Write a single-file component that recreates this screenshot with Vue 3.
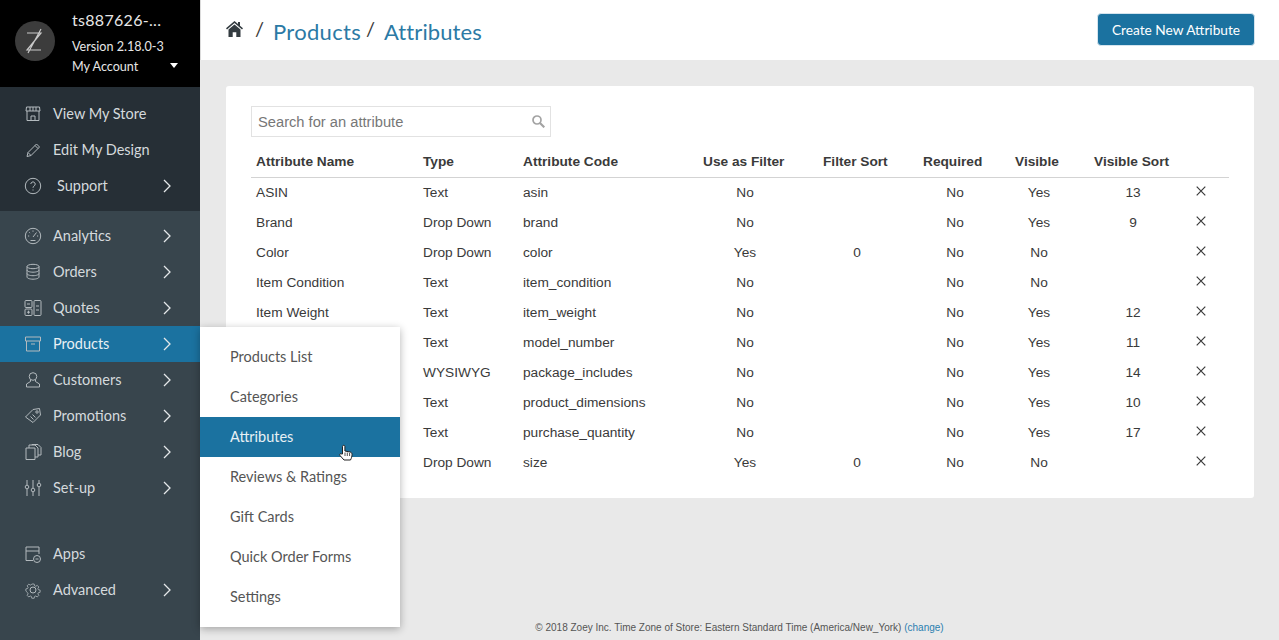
<script setup>
const topLinks = [
  { label: 'View My Store', icon: 'store' },
  { label: 'Edit My Design', icon: 'pencil' },
  { label: 'Support', icon: 'help', arrow: true, wide: true }
]

const mainLinks = [
  { label: 'Analytics', icon: 'gauge', arrow: true },
  { label: 'Orders', icon: 'stack', arrow: true },
  { label: 'Quotes', icon: 'calc', arrow: true },
  { label: 'Products', icon: 'box', arrow: true, active: true },
  { label: 'Customers', icon: 'user', arrow: true },
  { label: 'Promotions', icon: 'tag', arrow: true },
  { label: 'Blog', icon: 'pages', arrow: true },
  { label: 'Set-up', icon: 'sliders', arrow: true }
]

const lowerLinks = [
  { label: 'Apps', icon: 'apps' },
  { label: 'Advanced', icon: 'gear', arrow: true }
]

const subLinks = ['Products List', 'Categories', 'Attributes', 'Reviews & Ratings', 'Gift Cards', 'Quick Order Forms', 'Settings']

const headers = ['Attribute Name', 'Type', 'Attribute Code', 'Use as Filter', 'Filter Sort', 'Required', 'Visible', 'Visible Sort', '']

// the first column of the lower rows sits under the open flyout
const rows = [
  ['ASIN', 'Text', 'asin', 'No', '', 'No', 'Yes', '13'],
  ['Brand', 'Drop Down', 'brand', 'No', '', 'No', 'Yes', '9'],
  ['Color', 'Drop Down', 'color', 'Yes', '0', 'No', 'No', ''],
  ['Item Condition', 'Text', 'item_condition', 'No', '', 'No', 'No', ''],
  ['Item Weight', 'Text', 'item_weight', 'No', '', 'No', 'Yes', '12'],
  ['', 'Text', 'model_number', 'No', '', 'No', 'Yes', '11'],
  ['', 'WYSIWYG', 'package_includes', 'No', '', 'No', 'Yes', '14'],
  ['', 'Text', 'product_dimensions', 'No', '', 'No', 'Yes', '10'],
  ['', 'Text', 'purchase_quantity', 'No', '', 'No', 'Yes', '17'],
  ['', 'Drop Down', 'size', 'Yes', '0', 'No', 'No', '']
]

const icons = {
  store: '<path d="M2.500 2h13l.5 4H2zM6 2v4M9 2v4M12 2v4M3 6v9.500h12V6M7 15.500V11h4v4.500"/>',
  pencil: '<path d="M4 11.500 12.500 3l3 3L7 14.500l-4 1z"/><path d="m11 4.500 3 3M4 11.500l3 3"/>',
  help: '<circle cx="9" cy="9" r="7.700"/><path d="M6.800 7a2.200 2.200 0 1 1 3.300 2c-.8.500-1.100.9-1.100 1.800M9 12.500v1"/>',
  gauge: '<circle cx="9" cy="9" r="7.700"/><path d="m9 10 3.500-4.500M4 9h1.200M13 9h1.200M9 3.500v1.200M5.300 5.300l.8.800M6.500 13.500h5"/>',
  stack: '<ellipse cx="9" cy="3.500" rx="6" ry="2.200"/><path d="M3 3.500v10.500c0 1.200 2.700 2.200 6 2.200s6-1 6-2.200V3.500M3 7c0 1.200 2.700 2.200 6 2.200S15 8.200 15 7M3 10.500c0 1.200 2.700 2.200 6 2.200s6-1 6-2.200"/>',
  calc: '<rect x="1" y="1.500" width="7" height="7" rx="1"/><rect x="1" y="10" width="7" height="6.500" rx="1"/><rect x="10" y="1.500" width="7" height="15" rx="1"/><path d="M3 5h3M3 13.200h3M4.500 11.700v3M12 7h3M12 11h3"/>',
  box: '<path d="M1.500 2h15v4h-15zM2.500 6v10h13V6M7 9h4"/>',
  user: '<circle cx="9" cy="5.500" r="3.800"/><path d="M6.500 9v1.500L2.500 13v3h13v-3l-4-2.500V9"/>',
  tag: '<path d="M1.500 10 9 2.500l6.500-1 1 6.500L9 15.500z"/><circle cx="13" cy="5" r="1.200"/><path d="m6.500 9.500 3 3M8.500 7.500l3 3"/>',
  pages: '<path d="M2 5h9v11.500H2zM5 5V2h6l3 3v9h-3"/><path d="M8 2v-.5h6l3 3V12h-3"/>',
  sliders: '<path d="M3 1v5M3 10v7M9 1v8M9 13v4M15 1v3M15 8v9"/><circle cx="3" cy="8" r="1.800"/><circle cx="9" cy="11" r="1.800"/><circle cx="15" cy="6" r="1.800"/>',
  apps: '<path d="M9 15.500H2V2h13v7M2 6h13"/><circle cx="13" cy="14" r="3.500"/><path d="M11.500 14h3"/>',
  gear: '<circle cx="9" cy="9" r="3"/><path d="M7.500 1.500h3l.4 2.200 1.500.7 1.900-1.200 2 2.100-1.200 1.900.6 1.400 2.200.5v2.800l-2.200.5-.6 1.400 1.200 1.900-2 2-1.900-1.200-1.500.7-.4 2.100h-3l-.4-2.100-1.500-.7-1.900 1.200-2-2 1.200-1.900-.6-1.400L.1 10.400V7.600l2.200-.5.600-1.400L1.700 3.800l2-2.100 1.900 1.200 1.500-.7z" transform="translate(1.800 1.800) scale(.8)"/>'
}
</script>

<template>
  <div class="page">
    <aside class="sidebar">
      <div class="account">
        <div class="avatar">
          <svg width="24" height="30" viewBox="0 0 24 30" fill="none" stroke="#c9c9c9" stroke-width="1.200">
            <path d="M4 7h14L4 24h14M18 3 5 27" />
          </svg>
        </div>
        <div class="account-text">
          <div class="store-name">ts887626-...</div>
          <div class="version">Version 2.18.0-3</div>
          <div class="my-account">
            <span>My Account</span>
            <i class="caret"></i>
          </div>
        </div>
      </div>

      <nav class="nav nav-top">
        <a v-for="link in topLinks" :key="link.label" class="nav-item" :class="{ wide: link.wide }">
          <svg class="nav-icon" width="18" height="18" viewBox="0 0 18 18" fill="none" stroke="currentColor" stroke-width="1" v-html="icons[link.icon]"></svg>
          <span class="nav-label">{{ link.label }}</span>
          <svg v-if="link.arrow" class="nav-arrow" width="8" height="14" viewBox="0 0 8 14" fill="none" stroke="#e4e8ea" stroke-width="1.300"><path d="m1 1 6 6-6 6" /></svg>
        </a>
      </nav>

      <nav class="nav nav-main">
        <a v-for="link in mainLinks" :key="link.label" class="nav-item" :class="{ active: link.active }">
          <svg class="nav-icon" width="18" height="18" viewBox="0 0 18 18" fill="none" stroke="currentColor" stroke-width="1" v-html="icons[link.icon]"></svg>
          <span class="nav-label">{{ link.label }}</span>
          <svg v-if="link.arrow" class="nav-arrow" width="8" height="14" viewBox="0 0 8 14" fill="none" stroke="#e4e8ea" stroke-width="1.300"><path d="m1 1 6 6-6 6" /></svg>
        </a>
      </nav>

      <nav class="nav nav-lower">
        <a v-for="link in lowerLinks" :key="link.label" class="nav-item">
          <svg class="nav-icon" width="18" height="18" viewBox="0 0 18 18" fill="none" stroke="currentColor" stroke-width="1" v-html="icons[link.icon]"></svg>
          <span class="nav-label">{{ link.label }}</span>
          <svg v-if="link.arrow" class="nav-arrow" width="8" height="14" viewBox="0 0 8 14" fill="none" stroke="#e4e8ea" stroke-width="1.300"><path d="m1 1 6 6-6 6" /></svg>
        </a>
      </nav>
    </aside>

    <main class="main">
      <header class="topbar">
        <div class="crumbs">
          <svg class="home" width="17" height="16" viewBox="0 0 17 16" fill="#333b40">
            <path d="M8.500 0 0 7.300l1 1.100L8.500 2 16 8.400l1-1.100-3-2.600V1h-2v2z" />
            <path d="M8.500 3.400 2.500 8.500V16h4.200v-4.800h3.600V16h4.200V8.500z" />
          </svg>
          <span class="sep first">/</span>
          <span class="crumb">Products</span>
          <span class="sep">/</span>
          <span class="crumb last">Attributes</span>
        </div>
        <button type="button" class="create-btn">Create New Attribute</button>
      </header>

      <section class="content">
        <div class="card">
          <div class="search">
            <span class="search-text">Search for an attribute</span>
            <svg width="13" height="13" viewBox="0 0 13 13" fill="none" stroke="#a3a3a3" stroke-width="1.700">
              <circle cx="5" cy="5" r="4" />
              <path d="m8 8 4.300 4.300" stroke-width="2.200" />
            </svg>
          </div>

          <div class="table">
            <div class="row head">
              <div v-for="(h, i) in headers" :key="i" class="cell">{{ h }}</div>
            </div>
            <div v-for="row in rows" :key="row[2]" class="row">
              <div v-for="(value, i) in row" :key="i" class="cell" :class="i > 2 ? 'center c' + i : ''">{{ value }}</div>
              <div class="cell remove">
                <svg width="10" height="10" viewBox="0 0 10 10" fill="none" stroke="#3a3a3a" stroke-width="1.200">
                  <path d="m.7.7 8.600 8.600M9.300.7.700 9.300" />
                </svg>
              </div>
            </div>
          </div>
        </div>
      </section>

      <footer class="footer">
        © 2018 Zoey Inc. Time Zone of Store: Eastern Standard Time (America/New_York) <a>(change)</a>
      </footer>
    </main>

    <div class="flyout">
      <a v-for="item in subLinks" :key="item" class="fly-item" :class="{ current: item === 'Attributes' }"><span>{{ item }}</span></a>
    </div>

    <svg class="cursor" width="16" height="18" viewBox="0 0 16 18" stroke="#222" stroke-width="1" fill="#fff">
      <path d="M4.500 10V2.500a1.200 1.200 0 0 1 2.400 0V7l5 1c1.500.3 2.100 1 2.100 2.500 0 2-.5 3.500-1.500 5.500H6L2 11.500c-1-1.200.6-2.500 1.700-1.500z" />
      <path d="M7 8.500V12M9.300 8.500V12M11.600 9V12" fill="none" stroke-width=".8" />
    </svg>
  </div>
</template>

<style scoped>
.page {
  position: relative;
  display: flex;
  width: 1279px;
  height: 640px;
  overflow: hidden;
  font-family: "Liberation Sans", Arial, sans-serif;
  color: #3a3a3a;
}

.sidebar {
  flex: 0 0 200px;
  display: flex;
  flex-direction: column;
  background: #38454d;
  font-family: Lato, "Open Sans", sans-serif;
}

.account {
  display: flex;
  align-items: flex-start;
  height: 87px;
  padding: 9px 0 0 15px;
  box-sizing: border-box;
  background: #000;
  color: #e6e6e6;
}

.avatar {
  display: flex;
  align-items: center;
  justify-content: center;
  width: 40px;
  height: 40px;
  margin: 12px 17px 0 0;
  border-radius: 50%;
  background: #3c3c3c;
}

.account-text {
  flex: 1;
}

.store-name {
  font-size: 16px;
  line-height: 21px;
  letter-spacing: .3px;
}

.version {
  margin-top: 7px;
  font-size: 12.600px;
  line-height: 20px;
}

.my-account {
  display: flex;
  align-items: center;
  font-size: 12.600px;
  line-height: 20px;
}

.caret {
  width: 0;
  height: 0;
  margin: -3px 0 0 32px;
  border-left: 4.500px solid transparent;
  border-right: 4.500px solid transparent;
  border-top: 5px solid #fff;
}

.nav {
  display: flex;
  flex-direction: column;
}

.nav-top {
  height: 124px;
  padding-top: 9px;
  box-sizing: border-box;
  background: #262f36;
}

.nav-main {
  padding-top: 7px;
}

.nav-lower {
  margin-top: 30px;
}

.nav-item {
  display: flex;
  align-items: center;
  height: 36px;
  padding-left: 24px;
  color: #d5dadd;
  font-size: 14.500px;
}

.nav-item.active {
  background: #1b72a0;
  color: #e8f0f4;
}

.nav-icon {
  flex: none;
  color: #b3babe;
  margin-right: 11px;
}

.nav-item.wide .nav-label {
  margin-left: 4px;
}

.nav-label {
  flex: 1;
  padding-bottom: 2px;
}

.nav-arrow {
  margin-right: 29px;
}

.main {
  flex: 1;
  display: flex;
  flex-direction: column;
  min-width: 0;
  background: #e9e9e9;
}

.topbar {
  display: flex;
  align-items: center;
  justify-content: space-between;
  height: 60px;
  padding: 0 24px 0 25px;
  background: #fff;
  border-left: 1px solid #dcdcdc;
  box-sizing: border-box;
  font-family: Lato, "Open Sans", sans-serif;
}

.crumbs {
  display: flex;
  align-items: center;
  font-size: 22px;
  color: #2b7aa5;
}

.home {
  margin-top: -2px;
}

.sep {
  margin: -4px 9px 0 5px;
  color: #3a3a3a;
  font-size: 20px;
}

.sep.first {
  margin: -4px 9px 0 12px;
}

.crumb {
  padding-top: 2px;
  letter-spacing: .3px;
}

.crumb.last {
  letter-spacing: .1px;
}

.create-btn {
  width: 158px;
  height: 33px;
  padding: 0;
  margin-top: -1px;
  border: 1px solid #d4e4ee;
  border-radius: 4px;
  background: #1b72a0;
  color: #fff;
  font-family: inherit;
  font-size: 13.700px;
}

.content {
  padding: 26px 25px 0 26px;
}

.card {
  height: 412px;
  padding: 20px 25px 0;
  box-sizing: border-box;
  background: #fff;
  border-radius: 3px;
}

.search {
  display: flex;
  align-items: center;
  justify-content: space-between;
  width: 300px;
  height: 31px;
  padding: 0 5px 0 6px;
  box-sizing: border-box;
  border: 1px solid #e2e2e2;
}

.search-text {
  font-size: 14.700px;
  color: #777;
}

.table {
  width: 978px;
  margin-top: 9px;
  font-size: 13.700px;
}

.row {
  display: grid;
  grid-template-columns: 167px 100px 180px 120px 100px 92px 79px 91px 49px;
  align-items: center;
  height: 30px;
}

.row.head {
  height: 32px;
  border-bottom: 1px solid #d3d3d3;
  box-sizing: border-box;
  font-weight: 700;
}

.row:not(.head) .cell {
  padding-bottom: 2px;
}

.cell {
  padding-left: 5px;
}

.center {
  padding-left: 0;
  text-align: center;
}

.c3 { padding-right: 26px; }
.c4 { padding-right: 22px; }
.c5 { padding-right: 18px; }
.c6 { padding-right: 21px; }
.c7 { padding-right: 3px; }

.remove {
  display: flex;
  padding-left: 16px;
  margin-top: -2px;
}

.footer {
  margin-top: auto;
  padding-bottom: 6px;
  text-align: center;
  font-size: 10px;
  line-height: 13px;
  color: #555;
}

.footer a {
  color: #2b7fb0;
}

.flyout {
  position: absolute;
  left: 200px;
  top: 327px;
  width: 200px;
  padding: 10px 0;
  background: #fff;
  box-shadow: 0 2px 8px rgba(0, 0, 0, .3);
  font-family: Lato, "Open Sans", sans-serif;
}

.fly-item {
  display: flex;
  align-items: center;
  height: 40px;
  padding-left: 30px;
  font-size: 14.500px;
  color: #555;
}

.fly-item span {
  padding-bottom: 2px;
}

.fly-item.current {
  background: #1b72a0;
  color: #e8f0f4;
}

.cursor {
  position: absolute;
  left: 338px;
  top: 444px;
}
</style>
